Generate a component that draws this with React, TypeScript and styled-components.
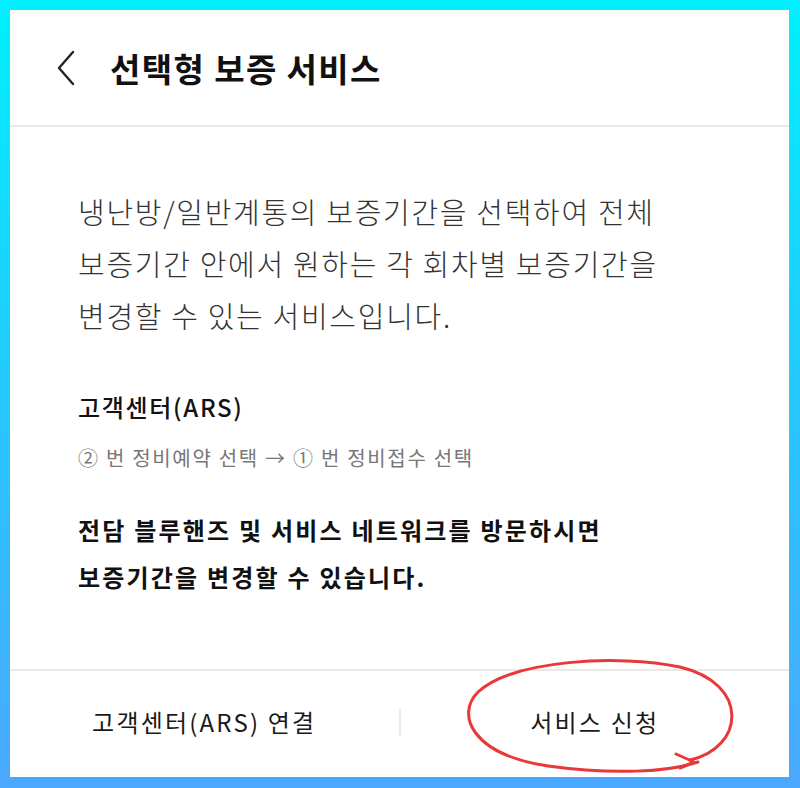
import styled, { createGlobalStyle } from 'styled-components';

const GlobalStyle = createGlobalStyle`
  html, body {
    margin: 0;
    padding: 0;
  }
  body {
    font-family: "Noto Sans CJK KR", "Noto Sans", sans-serif;
    color: #222;
  }
`;

const Frame = styled.div`
  width: 800px;
  height: 788px;
  box-sizing: border-box;
  padding: 10px 11px 11px 10px;
  background: linear-gradient(180deg, #00f0ff 0%, #25c8ff 50%, #4aa8ff 100%);
`;

const Panel = styled.div`
  position: relative;
  height: 100%;
  background: #ffffff;
  display: flex;
  flex-direction: column;
`;

const Header = styled.header`
  height: 115px;
  display: flex;
  align-items: center;
  gap: 34px;
  padding-left: 46px;
  border-bottom: 2px solid #ece9e4;
`;

const BackButton = styled.button`
  display: flex;
  align-items: center;
  padding: 0;
  border: none;
  background: none;
  cursor: pointer;
`;

const Title = styled.h1`
  margin: 0;
  font-size: 33px;
  font-weight: 700;
  color: #111;
  letter-spacing: 1.4px;
`;

const Body = styled.main`
  flex: 1;
  padding: 58px 30px 0 68px;
`;

const Lead = styled.p`
  margin: 0;
  font-size: 29px;
  line-height: 52px;
  font-weight: 300;
  color: #333;
  letter-spacing: 1.7px;
  white-space: nowrap;
`;

const SectionTitle = styled.h2`
  margin: 50px 0 0;
  font-size: 24px;
  line-height: 32px;
  font-weight: 500;
  color: #111;
  letter-spacing: 1.7px;
`;

const Steps = styled.p`
  margin: 22px 0 0;
  font-size: 20px;
  line-height: 26px;
  color: #777;
  letter-spacing: 1.7px;
  white-space: nowrap;
`;

const Notice = styled.p`
  margin: 35px 0 0;
  font-size: 24px;
  line-height: 47px;
  font-weight: 700;
  color: #111;
  letter-spacing: 2.2px;
  white-space: nowrap;
`;

const Footer = styled.footer`
  height: 106px;
  display: flex;
  align-items: center;
  border-top: 2px solid #ece9e4;
`;

const FooterButton = styled.button`
  flex: 1;
  height: 100%;
  border: none;
  background: none;
  padding: 0 0 6px;
  font-family: inherit;
  font-size: 24px;
  font-weight: 400;
  color: #1a1a1a;
  letter-spacing: 2.2px;
  cursor: pointer;
`;

const Separator = styled.span`
  width: 2px;
  height: 26px;
  margin-bottom: 4px;
  background: #ece9e4;
`;

const Scribble = styled.svg`
  position: absolute;
  left: 0;
  top: 0;
  width: 100%;
  height: 100%;
  pointer-events: none;
`;

function ChevronLeft() {
  return (
    <svg width="20" height="36" viewBox="0 0 20 36" fill="none">
      <polyline points="17,2 3,18 17,34" stroke="#222" strokeWidth="2.4" strokeLinecap="round" strokeLinejoin="round" />
    </svg>
  );
}

export default function App() {
  return (
    <>
      <GlobalStyle />
      <Frame>
        <Panel>
          <Header>
            <BackButton aria-label="뒤로">
              <ChevronLeft />
            </BackButton>
            <Title>선택형 보증 서비스</Title>
          </Header>
          <Body>
            <Lead>
              냉난방/일반계통의 보증기간을 선택하여 전체
              <br />
              보증기간 안에서 원하는 각 회차별 보증기간을
              <br />
              변경할 수 있는 서비스입니다.
            </Lead>
            <SectionTitle>고객센터(ARS)</SectionTitle>
            <Steps>② 번 정비예약 선택 → ① 번 정비접수 선택</Steps>
            <Notice>
              전담 블루핸즈 및 서비스 네트워크를 방문하시면
              <br />
              보증기간을 변경할 수 있습니다.
            </Notice>
          </Body>
          <Footer>
            <FooterButton>고객센터(ARS) 연결</FooterButton>
            <Separator />
            <FooterButton>서비스 신청</FooterButton>
          </Footer>
          {/* hand-drawn red mark around the apply button */}
          <Scribble viewBox="0 0 779 767" fill="none">
            <path
              d="M 680 750 C 734 738, 741 674, 670 657 C 608 644, 503 650, 468 682 C 446 704, 460 744, 538 756 C 603 765, 658 762, 688 752"
              stroke="#e8383a"
              strokeWidth="3"
              strokeLinecap="round"
            />
            <path d="M 666 744 L 684 752 L 670 758" stroke="#e8383a" strokeWidth="3" strokeLinecap="round" strokeLinejoin="round" />
          </Scribble>
        </Panel>
      </Frame>
    </>
  );
}
